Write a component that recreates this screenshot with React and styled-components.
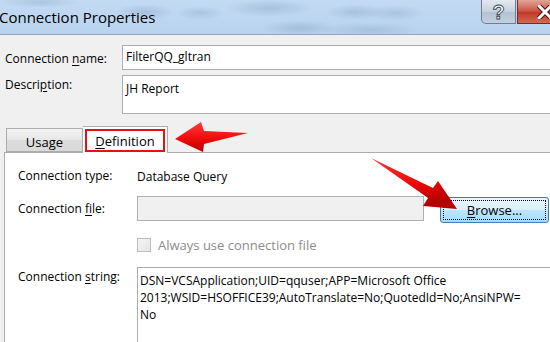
import React from "react";
import styled, { createGlobalStyle } from "styled-components";

const GlobalStyle = createGlobalStyle`
  html, body {
    margin: 0;
    padding: 0;
  }
  body {
    width: 550px;
    height: 342px;
    overflow: hidden;
    background: #f0f0f0;
    font-family: "Open Sans", "Noto Sans", sans-serif;
    font-size: 12px;
    color: #000;
  }
`;

const Window = styled.div`
  position: relative;
  width: 550px;
  height: 342px;
  overflow: hidden;
  background: #f0f0f0;
`;

const TitleBar = styled.div`
  height: 34px;
  border-bottom: 1px solid #8ea6c0;
  display: flex;
  justify-content: space-between;
  align-items: flex-start;
  background:
    radial-gradient(ellipse 30px 8px at 145px 12px, rgba(120, 150, 185, 0.35), transparent),
    radial-gradient(ellipse 25px 7px at 200px 13px, rgba(120, 150, 185, 0.3), transparent),
    radial-gradient(ellipse 45px 9px at 270px 8px, rgba(120, 150, 185, 0.35), transparent),
    radial-gradient(ellipse 40px 8px at 300px 28px, rgba(120, 150, 185, 0.35), transparent),
    radial-gradient(ellipse 30px 8px at 355px 12px, rgba(120, 150, 185, 0.35), transparent),
    radial-gradient(ellipse 30px 8px at 395px 13px, rgba(120, 150, 185, 0.3), transparent),
    radial-gradient(ellipse 50px 8px at 370px 30px, rgba(120, 150, 185, 0.3), transparent),
    radial-gradient(ellipse 40px 6px at 40px 2px, rgba(120, 150, 185, 0.3), transparent),
    linear-gradient(#c3daf2, #b9d3ee);
`;

const Title = styled.div`
  font-size: 15px;
  line-height: 34px;
  margin-left: -1px;
  white-space: nowrap;
`;

const CaptionButtons = styled.div`
  display: flex;
  gap: 1px;
  margin-right: -15px;
`;

const HelpButton = styled.div`
  width: 35px;
  height: 24px;
  box-sizing: border-box;
  border: 1px solid #6f7f91;
  border-top: none;
  border-radius: 0 0 0 5px;
  background: linear-gradient(#e2e9f1, #c6d2de 50%, #b3c2d2 51%, #c3d0dd);
  display: flex;
  align-items: center;
  justify-content: center;
  font-family: "Liberation Sans", sans-serif;
  font-weight: bold;
  font-size: 20px;
  line-height: 20px;
  color: #fff;
  -webkit-text-stroke: 0.9px #3a4756;
`;

const CloseButton = styled.div`
  width: 48px;
  height: 24px;
  box-sizing: border-box;
  border: 1px solid #7a2a20;
  border-top: none;
  background: linear-gradient(#e1a497, #cf5a48 45%, #c0392a 55%, #d26b50);
  display: flex;
  align-items: center;
  padding-left: 19px;
`;

const Body = styled.div`
  width: 600px;
  padding-top: 10px;
`;

const FieldRow = styled.div`
  display: flex;
  padding-left: 5px;
  margin-top: ${({ $gap }) => $gap || 0}px;
`;

const Label = styled.div`
  width: ${({ $w }) => $w}px;
  flex-shrink: 0;
  line-height: 16px;
  padding-top: ${({ $top }) => $top || 0}px;
  white-space: nowrap;
`;

const Key = styled.span`
  text-decoration: underline;
  text-underline-offset: 2px;
`;

const TextBox = styled.div`
  flex: 1;
  height: ${({ $h }) => $h}px;
  box-sizing: border-box;
  border: 1px solid #abadb3;
  background: ${({ $disabled }) => ($disabled ? "#f0f0f0" : "#fff")};
  padding: ${({ $pt }) => $pt || 0}px 0 0 ${({ $pl }) => $pl || 3}px;
  line-height: ${({ $lh }) => $lh || 16}px;
  white-space: nowrap;
`;

const TabStrip = styled.div`
  display: flex;
  align-items: flex-end;
  padding-left: 6px;
  margin-top: 12px;
`;

const Tab = styled.div`
  position: relative;
  box-sizing: border-box;
  width: ${({ $w }) => $w}px;
  height: ${({ $active }) => ($active ? 27 : 24)}px;
  margin-bottom: ${({ $active }) => ($active ? -1 : 0)}px;
  z-index: ${({ $active }) => ($active ? 1 : 0)};
  border: 1px solid #adadad;
  border-bottom: ${({ $active }) => ($active ? "none" : "1px solid #adadad")};
  border-left: ${({ $active }) => ($active ? "none" : "1px solid #adadad")};
  background: ${({ $active }) =>
    $active ? "#fff" : "linear-gradient(#f3f3f3, #e7e7e7 50%, #dcdcdc 51%, #d9d9d9)"};
  display: flex;
  align-items: center;
  justify-content: center;
  padding-top: ${({ $active }) => ($active ? 0 : 4)}px;
  font-size: 13px;
`;

const Highlight = styled.div`
  position: absolute;
  left: 2px;
  right: 2px;
  top: 2px;
  bottom: 1px;
  border: 2px solid #e81010;
  display: flex;
  align-items: center;
  justify-content: center;
  padding-top: 1px;
  font-size: 13px;
`;

const Panel = styled.div`
  margin-left: 4px;
  height: 200px;
  box-sizing: border-box;
  border: 1px solid #adadad;
  background: #fff;
  padding: 13px 0 0 13px;
`;

const PanelRow = styled.div`
  display: flex;
  align-items: ${({ $align }) => $align || "center"};
  margin-top: ${({ $gap }) => $gap || 0}px;
  height: ${({ $h }) => ($h ? `${$h}px` : "auto")};
`;

const FileBox = styled.div`
  width: 287px;
  height: 25px;
  box-sizing: border-box;
  border: 1px solid #adb2b5;
  background: #f0f0f0;
`;

const BrowseButton = styled.div`
  margin-left: 16px;
  margin-top: 1px;
  width: 109px;
  height: 26px;
  box-sizing: border-box;
  border: 1px solid #3c7fb1;
  border-radius: 3px;
  background: linear-gradient(#eaf6fd, #d9f0fc 50%, #bee6fd 51%, #a7d9f5);
  padding: 2px;
`;

const FocusRect = styled.div`
  height: 100%;
  box-sizing: border-box;
  border: 1px dotted #000;
  display: flex;
  align-items: center;
  justify-content: center;
  font-size: 13px;
`;

const Check = styled.div`
  width: 14px;
  height: 14px;
  box-sizing: border-box;
  border: 1px solid #bcbcbc;
  background: linear-gradient(135deg, #f4f4f4, #e6e6e6);
  margin-right: 7px;
`;

const Muted = styled.span`
  color: #8d8d8d;
  font-size: 13px;
`;

const Overlay = styled.svg`
  position: absolute;
  left: 0;
  top: 0;
  pointer-events: none;
`;

const CloseGlyph = () => (
  <svg width="16" height="14" viewBox="0 0 16 14">
    <path d="M2 1 L14 13 M14 1 L2 13" stroke="#4a1510" strokeWidth="5" strokeLinecap="square" />
    <path d="M2 1 L14 13 M14 1 L2 13" stroke="#fff" strokeWidth="3" strokeLinecap="square" />
  </svg>
);

const Arrows = () => (
  <Overlay width="550" height="342" viewBox="0 0 550 342">
    <defs>
      <linearGradient id="red1" x1="0" y1="0" x2="0" y2="1">
        <stop offset="0" stopColor="#ff3a3a" />
        <stop offset="0.55" stopColor="#f00c0c" />
        <stop offset="1" stopColor="#b80000" />
      </linearGradient>
      <linearGradient id="red2" x1="0" y1="0" x2="0.4" y2="1">
        <stop offset="0" stopColor="#ff3030" />
        <stop offset="0.6" stopColor="#ee0a0a" />
        <stop offset="1" stopColor="#b50000" />
      </linearGradient>
    </defs>
    <polygon
      points="248,133 204,131 201,122 175,139 203,152 204,144"
      fill="url(#red1)"
    />
    <polygon
      points="371,158 433,188 438,181 457,209 423,206 428,198"
      fill="url(#red2)"
    />
  </Overlay>
);

const App = () => {
  return (
    <Window>
      <GlobalStyle />
      <TitleBar>
        <Title>Connection Properties</Title>
        <CaptionButtons>
          <HelpButton>?</HelpButton>
          <CloseButton>
            <CloseGlyph />
          </CloseButton>
        </CaptionButtons>
      </TitleBar>
      <Body>
        <FieldRow>
          <Label $w={117} $top={6}>
            Connection <Key>n</Key>ame:
          </Label>
          <TextBox $h={25} $pt={3}>FilterQQ_gltran</TextBox>
        </FieldRow>
        <FieldRow $gap={5}>
          <Label $w={117} $top={2}>
            Descri<Key>p</Key>tion:
          </Label>
          <TextBox $h={39} $pt={5}>JH Report</TextBox>
        </FieldRow>
        <TabStrip>
          <Tab $w={77}>
            Usa<Key>g</Key>e
          </Tab>
          <Tab $w={85} $active>
            <Highlight>
              <span>
                <Key>D</Key>efinition
              </span>
            </Highlight>
          </Tab>
        </TabStrip>
        <Panel>
          <PanelRow $h={20}>
            <Label $w={119}>Connection type:</Label>
            <span>Database Query</span>
          </PanelRow>
          <PanelRow $gap={10} $h={26} $align="flex-start">
            <Label $w={119} $top={5}>
              Connection <Key>f</Key>ile:
            </Label>
            <FileBox />
            <BrowseButton>
              <FocusRect>
                <span>
                  <Key>B</Key>rowse...
                </span>
              </FocusRect>
            </BrowseButton>
          </PanelRow>
          <PanelRow $gap={14} $h={17}>
            <Label $w={119} />
            <Check />
            <Muted>Always use connection file</Muted>
          </PanelRow>
          <PanelRow $gap={14} $align="flex-start">
            <Label $w={119} $top={2}>
              Connection <Key>s</Key>tring:
            </Label>
            <TextBox $h={90} $pt={4} $pl={2} $lh={17}>
              DSN=VCSApplication;UID=qquser;APP=Microsoft Office
              <br />
              2013;WSID=HSOFFICE39;AutoTranslate=No;QuotedId=No;AnsiNPW=
              <br />
              No
            </TextBox>
          </PanelRow>
        </Panel>
      </Body>
      <Arrows />
    </Window>
  );
};

export default App;
